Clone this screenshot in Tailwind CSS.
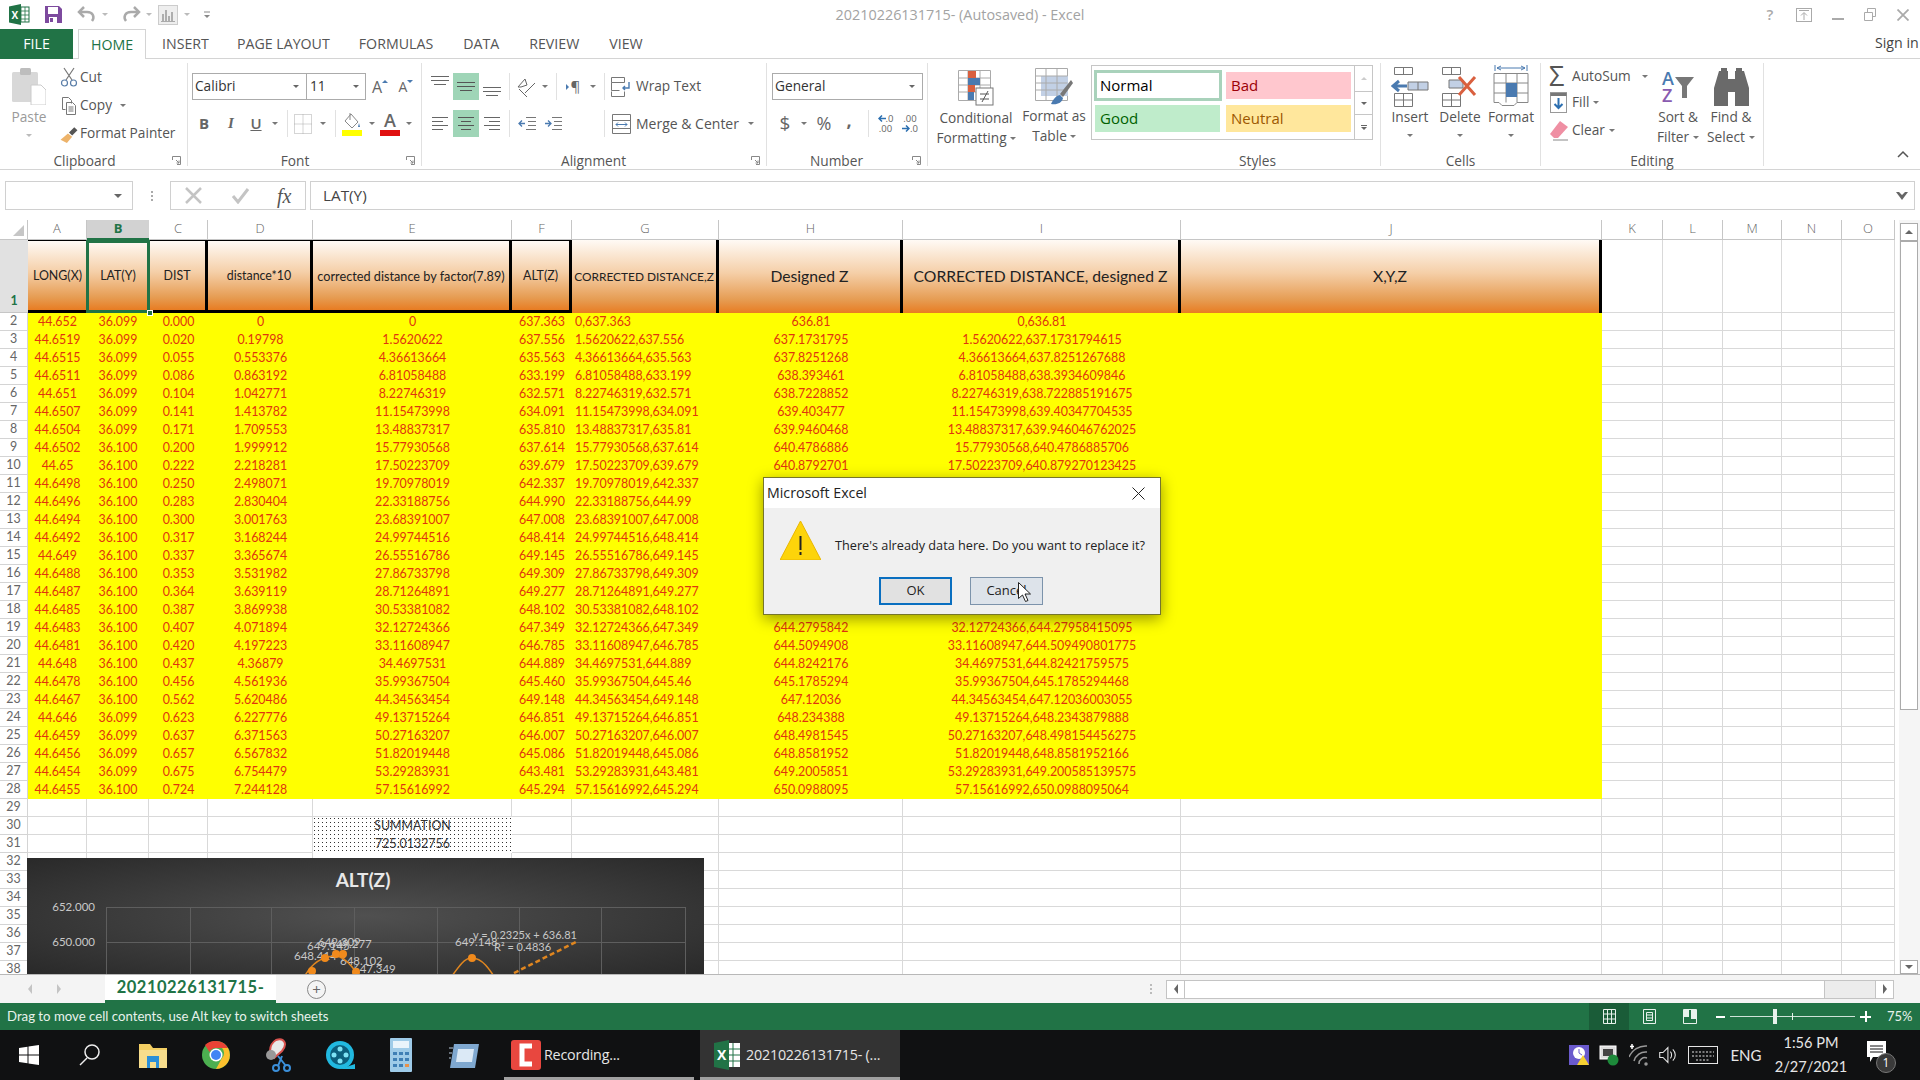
<!DOCTYPE html>
<html lang="en">
<head>
<meta charset="UTF-8">
<title>20210226131715- (Autosaved) - Excel</title>
<script src="https://cdn.jsdelivr.net/npm/@tailwindcss/browser@4"></script>
</head>
<body class="bg-white">
<div class="relative flex flex-col w-[1920px] h-[1080px] overflow-hidden bg-white text-[13.7px] text-[#555] font-['Open_Sans',sans-serif]">

  <!-- title bar -->
  <div class="relative flex items-center h-[29px] shrink-0">
    <svg class="ml-[9px] w-[21px] h-[21px]" viewBox="0 0 21 21"><rect x="8" y="3" width="12" height="15" fill="#fff" stroke="#217346"/><path d="M12 3v15M16 3v15M8 7h12M8 11h12M8 15h12" stroke="#217346" stroke-width=".8"/><path d="M0 2.500 12 0v21L0 18.500z" fill="#217346"/><text x="2.500" y="14.500" font-size="10" font-weight="700" fill="#fff">X</text></svg>
    <svg class="ml-[14px] w-[19px] h-[19px]" viewBox="0 0 19 19"><path d="M1 1h14l3 3v14H1z" fill="#7d4a9e"/><rect x="4" y="2" width="10" height="7" fill="#fff"/><rect x="5" y="12" width="8" height="6" fill="#fff"/><rect x="6" y="13" width="3" height="4" fill="#7d4a9e"/></svg>
    <svg class="ml-[14px] w-[20px] h-[18px]" viewBox="0 0 20 18" fill="none" stroke="#aaa" stroke-width="2.500"><path d="M15 15c3-4 1-9-5-9H3"/><path d="M7 1 2 6l5 5"/></svg>
    <span class="ml-[5px] border-x-[3px] border-t-[3px] border-x-transparent border-t-[#bbb]"></span>
    <svg class="ml-[13px] w-[20px] h-[18px]" viewBox="0 0 20 18" fill="none" stroke="#aaa" stroke-width="2.500"><path d="M5 15C2 11 4 6 10 6h7"/><path d="m13 1 5 5-5 5"/></svg>
    <span class="ml-[5px] border-x-[3px] border-t-[3px] border-x-transparent border-t-[#bbb]"></span>
    <svg class="ml-[6px] w-[20px] h-[20px]" viewBox="0 0 20 20"><rect x=".5" y=".5" width="19" height="19" fill="#eee" stroke="#ccc"/><path d="M5 16V9M8 16V5M11 16v-5M14 16V7" stroke="#999" stroke-width="1.500"/><path d="M3 16.500h14" stroke="#aaa"/></svg>
    <span class="ml-[6px] border-x-[3px] border-t-[3px] border-x-transparent border-t-[#bbb]"></span>
    <svg class="ml-[13px] w-[8px] h-[8px]" viewBox="0 0 8 8"><path d="M1 1h6" stroke="#888"/><path d="m1 4 3 3 3-3z" fill="#888"/></svg>
    <div class="absolute left-0 right-0 top-0 h-[29px] flex items-center justify-center text-[14.400px] text-[#a3a3a3]">20210226131715- (Autosaved) - Excel</div>
    <div class="ml-auto flex items-center text-[#aaa]">
      <span class="w-[24px] text-center text-[15px] font-semibold">?</span>
      <svg class="ml-[14px] w-[16px] h-[14px]" viewBox="0 0 16 14" fill="none" stroke="#aaa"><rect x=".5" y=".5" width="15" height="13"/><path d="M3 2.500h10M8 12V5M5 7.500l3-3 3 3"/></svg>
      <svg class="ml-[20px] w-[12px] h-[12px]" viewBox="0 0 12 12"><path d="M0 10h12" stroke="#aaa" stroke-width="2"/></svg>
      <svg class="ml-[20px] w-[12px] h-[13px]" viewBox="0 0 12 13" fill="none" stroke="#aaa"><path d="M.5 4.500h8v8h-8zM3.500 4.500v-4h8v8h-3"/></svg>
      <svg class="ml-[21px] mr-[11px] w-[12px] h-[12px]" viewBox="0 0 12 12" stroke="#aaa" stroke-width="1.800"><path d="m.5.500 11 11M11.500.500l-11 11"/></svg>
    </div>
  </div>

  <!-- tabs -->
  <div class="flex items-end h-[30px] shrink-0 border-b border-[#d4d4d4] text-[14.200px] text-[#555]">
    <div class="flex items-center justify-center w-[73px] h-[30px] bg-[#217346] text-white -mb-px">FILE</div>
    <div class="flex items-center justify-center ml-[5px] w-[68px] h-[30px] bg-white border-x border-t border-[#d4d4d4] text-[#217346] -mb-px">HOME</div>
    <div class="flex items-center h-[29px] ml-[16px]">INSERT</div>
    <div class="flex items-center h-[29px] ml-[28px]">PAGE LAYOUT</div>
    <div class="flex items-center h-[29px] ml-[29px]">FORMULAS</div>
    <div class="flex items-center h-[29px] ml-[30px]">DATA</div>
    <div class="flex items-center h-[29px] ml-[30px]">REVIEW</div>
    <div class="flex items-center h-[29px] ml-[30px]">VIEW</div>
    <div class="flex items-center h-[29px] ml-auto pb-[2px] pr-0 text-[#444] whitespace-nowrap w-[45px] overflow-hidden">Sign in</div>
  </div>

  <!-- ribbon -->
  <div class="flex h-[111px] shrink-0 pt-[4px] border-b border-[#d4d4d4]">

    <!-- Clipboard -->
    <div class="relative flex flex-col w-[188px] h-[103px] border-r border-[#e1e1e1]">
      <div class="flex h-[92px]">
        <div class="flex flex-col items-center w-[58px] pt-[5px] text-[#9a9a9a]">
          <svg class="w-[34px] h-[37px]" viewBox="0 0 34 37"><rect x="0" y="4" width="26" height="30" rx="1.500" fill="#d8d8d8"/><rect x="8" y="0" width="11" height="7" rx="1.500" fill="#bdbdbd"/><path d="M19 17h10l5 5v15H19z" fill="#fff" stroke="#ccc"/></svg>
          <span class="mt-[2px] leading-[20px]">Paste</span>
          <span class="mt-[7px] border-x-[3px] border-t-[3px] border-x-transparent border-t-[#bbb]"></span>
        </div>
        <div class="flex flex-col text-[#555]">
          <div class="flex items-center h-[28px]"><svg class="w-[22px] h-[20px]" viewBox="0 0 18 20" fill="none" stroke="#5a7ea8" stroke-width="1.200"><path d="m4 1 8 12M14 1 6 13" stroke="#777"/><circle cx="4.500" cy="16" r="3"/><circle cx="13.500" cy="16" r="3"/></svg>Cut</div>
          <div class="flex items-center h-[28px]"><svg class="w-[22px] h-[19px]" viewBox="0 0 18 19" fill="none" stroke="#777"><path d="M2.500 1.500h6l3 3v3M2.500 1.500v12h3"/><path d="M6.500 6.500h6l3 3v9h-9zM8.500 11h5M8.500 13h5M8.500 15h5"/></svg>Copy<span class="ml-[8px] border-x-[3px] border-t-[3px] border-x-transparent border-t-[#777]"></span></div>
          <div class="flex items-center h-[28px]"><svg class="w-[22px] h-[19px]" viewBox="0 0 18 18"><path d="M8 9 1 15l6 3 5-6z" fill="#edb36a"/><path d="m9 8 5-5 3 3-5 5z" fill="#555"/></svg>Format Painter</div>
        </div>
      </div>
      <div class="h-[11px] leading-[11px] text-center pr-[18px]">Clipboard</div>
      <svg class="absolute right-[6px] top-[93px] w-[9px] h-[9px]" viewBox="0 0 9 9" fill="none" stroke="#888"><path d="M.5 4V.5h8v8H5M4 4l3 3M7 4.500V7H4.500"/></svg>
    </div>

    <!-- Font -->
    <div class="relative flex flex-col w-[234px] h-[103px] border-r border-[#e1e1e1] pl-[4px]">
      <div class="h-[92px] pt-[10px]">
        <div class="flex h-[27px]">
          <div class="flex items-center justify-between w-[115px] pl-[2px] pr-[7px] border border-[#ababab] text-[#333]">Calibri<span class="border-x-[3px] border-t-[3px] border-x-transparent border-t-[#666]"></span></div>
          <div class="flex items-center justify-between w-[60px] -ml-px pl-[3px] pr-[6px] border border-[#ababab] text-[#333]">11<span class="border-x-[3px] border-t-[3px] border-x-transparent border-t-[#666]"></span></div>
          <div class="flex items-center justify-center w-[24px] ml-[2px] text-[16px] text-[#666]">A<span class="-mt-[10px] border-x-[3px] border-b-[3px] border-x-transparent border-b-[#4a7ab0]"></span></div>
          <div class="flex items-center justify-center w-[24px] ml-[2px] text-[14px] text-[#666]">A<span class="-mt-[10px] border-x-[3px] border-t-[3px] border-x-transparent border-t-[#4a7ab0]"></span></div>
        </div>
        <div class="flex items-center h-[27px] mt-[10px] text-[#666]">
          <div class="w-[24px] text-center font-bold text-[15px]">B</div>
          <div class="w-[30px] text-center italic font-semibold text-[15px] font-['Liberation_Serif',serif]">I</div>
          <div class="w-[20px] text-center underline font-semibold text-[15px]">U</div>
          <div class="flex justify-center w-[18px]"><span class="border-x-[3px] border-t-[3px] border-x-transparent border-t-[#777]"></span></div>
          <div class="ml-[3px] w-px h-[27px] bg-[#e1e1e1]"></div>
          <div class="flex justify-center w-[30px]"><svg class="w-[18px] h-[20px]" viewBox="0 0 18 20" fill="none" stroke="#aaa" stroke-dasharray="1 1"><path d="M.5.500h17v19H.5zM9 .5v19M.5 10h17"/></svg></div>
          <div class="flex justify-center w-[10px]"><span class="border-x-[3px] border-t-[3px] border-x-transparent border-t-[#777]"></span></div>
          <div class="ml-[7px] w-px h-[27px] bg-[#e1e1e1]"></div>
          <div class="flex justify-center w-[32px]"><svg class="w-[20px] h-[24px]" viewBox="0 0 20 24"><path d="m9 2 7 8-6 6-7-7z" fill="#fff" stroke="#888"/><path d="M8 1v7" stroke="#888"/><path d="m17 11 1 4h-2z" fill="#4a7ab0"/><rect y="18" width="20" height="6" fill="#ffff00"/></svg></div>
          <div class="flex justify-center w-[8px]"><span class="border-x-[3px] border-t-[3px] border-x-transparent border-t-[#777]"></span></div>
          <div class="flex flex-col items-center w-[28px]"><span class="text-[18px] leading-[19px] font-semibold">A</span><span class="w-[20px] h-[6px] bg-[#e01010]"></span></div>
          <div class="flex justify-center w-[10px]"><span class="border-x-[3px] border-t-[3px] border-x-transparent border-t-[#777]"></span></div>
        </div>
      </div>
      <div class="h-[11px] leading-[11px] text-center pr-[23px]">Font</div>
      <svg class="absolute right-[6px] top-[93px] w-[9px] h-[9px]" viewBox="0 0 9 9" fill="none" stroke="#888"><path d="M.5 4V.5h8v8H5M4 4l3 3M7 4.500V7H4.500"/></svg>
    </div>

    <!-- Alignment -->
    <div class="relative flex flex-col w-[345px] h-[103px] border-r border-[#e1e1e1] pl-[5px]">
      <div class="h-[92px] pt-[10px]">
        <div class="flex items-center h-[27px]">
          <div class="flex justify-center items-start w-[26px] h-[27px] pt-[3px]"><svg class="w-[18px] h-[10px]" viewBox="0 0 18 10" stroke="#666"><path d="M0 .5h18M0 4.500h18M3 8.500h12"/></svg></div>
          <div class="flex justify-center items-center w-[26px] h-[27px] bg-[#9fd5b7]"><svg class="w-[18px] h-[10px]" viewBox="0 0 18 10" stroke="#555"><path d="M0 .5h18M0 4.500h18M3 8.500h12"/></svg></div>
          <div class="flex justify-center items-end w-[26px] h-[27px] pb-[3px]"><svg class="w-[18px] h-[10px]" viewBox="0 0 18 10" stroke="#666"><path d="M0 .5h18M0 4.500h18M3 8.500h12"/></svg></div>
          <div class="ml-[4px] w-px h-[27px] bg-[#e1e1e1]"></div>
          <div class="flex justify-center w-[32px]"><svg class="w-[20px] h-[20px]" viewBox="0 0 20 20" fill="none" stroke="#666"><path d="m2 10 7-8 2 6-6 2zM9 16 19 6M3 12l8 8"/></svg></div>
          <div class="flex justify-center w-[6px]"><span class="border-x-[3px] border-t-[3px] border-x-transparent border-t-[#777]"></span></div>
          <div class="ml-[8px] w-px h-[27px] bg-[#e1e1e1]"></div>
          <div class="flex justify-center items-center w-[32px] text-[15px] text-[#666]"><span class="mr-[2px] border-y-[3px] border-l-[3px] border-y-transparent border-l-[#4a7ab0]"></span>¶</div>
          <div class="flex justify-center w-[8px]"><span class="border-x-[3px] border-t-[3px] border-x-transparent border-t-[#777]"></span></div>
          <div class="ml-[7px] w-px h-[27px] bg-[#e1e1e1]"></div>
          <div class="flex justify-center w-[32px]"><svg class="w-[20px] h-[20px]" viewBox="0 0 20 20" fill="none" stroke="#777"><path d="M.5.500h13v5H.5zM.5 5.500v8h8M.5 14.500v5h13v-5"/><path d="M18 5v6h-6m2-2-2 2 2 2" stroke="#4a7ab0" stroke-width="1.400"/></svg></div>
          <span class="-ml-[1px]">Wrap Text</span>
        </div>
        <div class="flex items-center h-[27px] mt-[10px]">
          <div class="flex justify-center w-[26px]"><svg class="w-[16px] h-[14px]" viewBox="0 0 16 14" stroke="#666"><path d="M0 .5h16M0 4.500h11M0 8.500h16M0 12.500h11"/></svg></div>
          <div class="flex justify-center items-center w-[26px] h-[27px] bg-[#9fd5b7]"><svg class="w-[16px] h-[14px]" viewBox="0 0 16 14" stroke="#555"><path d="M0 .5h16M3 4.500h10M0 8.500h16M3 12.500h10"/></svg></div>
          <div class="flex justify-center w-[26px]"><svg class="w-[16px] h-[14px]" viewBox="0 0 16 14" stroke="#666"><path d="M0 .5h16M5 4.500h11M0 8.500h16M5 12.500h11"/></svg></div>
          <div class="ml-[4px] w-px h-[27px] bg-[#e1e1e1]"></div>
          <div class="flex justify-center w-[34px]"><svg class="w-[18px] h-[13px]" viewBox="0 0 18 13" fill="none" stroke="#777"><path d="M8 .5h10M8 12.500h10M10 4.500h8M10 8.500h8"/><path d="M7 6.500H1m3-3-3 3 3 3" stroke="#4a7ab0" stroke-width="1.300"/></svg></div>
          <div class="flex justify-center w-[18px]"><svg class="w-[18px] h-[13px]" viewBox="0 0 18 13" fill="none" stroke="#777"><path d="M8 .5h10M8 12.500h10M10 4.500h8M10 8.500h8"/><path d="M1 6.500h6m-3-3 3 3-3 3" stroke="#4a7ab0" stroke-width="1.300"/></svg></div>
          <div class="ml-[42px] w-px h-[27px] bg-[#e1e1e1]"></div>
          <div class="flex justify-center w-[32px]"><svg class="w-[19px] h-[20px]" viewBox="0 0 19 20" fill="none" stroke="#777"><path d="M.5.500h18v19H.5zM.5 6.500h18M.5 14.500h18"/><path d="M4 10.500h11m-9-2-2 2 2 2m7-4 2 2-2 2" stroke="#4a7ab0"/></svg></div>
          <span class="-ml-[1px] text-[14px]">Merge &amp; Center</span>
          <span class="ml-[9px] border-x-[3px] border-t-[3px] border-x-transparent border-t-[#777]"></span>
        </div>
      </div>
      <div class="h-[11px] leading-[11px] text-center pr-[6px]">Alignment</div>
      <svg class="absolute right-[6px] top-[93px] w-[9px] h-[9px]" viewBox="0 0 9 9" fill="none" stroke="#888"><path d="M.5 4V.5h8v8H5M4 4l3 3M7 4.500V7H4.500"/></svg>
    </div>

    <!-- Number -->
    <div class="relative flex flex-col w-[161px] h-[103px] border-r border-[#e1e1e1] pl-[5px]">
      <div class="h-[92px] pt-[10px]">
        <div class="flex items-center justify-between w-[151px] h-[27px] pl-[2px] pr-[7px] border border-[#ababab] text-[#333]">General<span class="border-x-[3px] border-t-[3px] border-x-transparent border-t-[#666]"></span></div>
        <div class="flex items-center h-[27px] mt-[10px] text-[#666]">
          <div class="w-[26px] text-center text-[19px]">$</div>
          <div class="flex justify-center w-[12px]"><span class="border-x-[3px] border-t-[3px] border-x-transparent border-t-[#777]"></span></div>
          <div class="w-[28px] text-center text-[18px]">%</div>
          <div class="w-[22px] -mt-[7px] text-center text-[18px] font-bold">,</div>
          <div class="ml-[8px] w-px h-[27px] bg-[#e1e1e1]"></div>
          <div class="flex flex-col items-center w-[33px] text-[9.500px] leading-[10px]">
            <span class="flex items-center"><svg class="w-[8px] h-[7px]" viewBox="0 0 8 7" fill="none" stroke="#2c6fb0" stroke-width="1.500"><path d="M8 3.500H1m3-3-3 3 3 3"/></svg>.0</span><span>.00</span>
          </div>
          <div class="flex flex-col items-center w-[16px] text-[9.500px] leading-[10px]">
            <span>.00</span><span class="flex items-center"><svg class="w-[8px] h-[7px]" viewBox="0 0 8 7" fill="none" stroke="#2c6fb0" stroke-width="1.500"><path d="M0 3.500h7m-3-3 3 3-3 3"/></svg>.0</span>
          </div>
        </div>
      </div>
      <div class="h-[11px] leading-[11px] text-center pr-[26px]">Number</div>
      <svg class="absolute right-[6px] top-[93px] w-[9px] h-[9px]" viewBox="0 0 9 9" fill="none" stroke="#888"><path d="M.5 4V.5h8v8H5M4 4l3 3M7 4.500V7H4.500"/></svg>
    </div>

    <!-- Styles -->
    <div class="flex flex-col w-[453px] h-[103px] border-r border-[#e1e1e1]">
      <div class="flex h-[92px]">
        <div class="flex flex-col items-center w-[96px] pt-[7px] leading-[20px] whitespace-nowrap">
          <svg class="w-[36px] h-[36px]" viewBox="0 0 36 36"><path d="M.5.500h32v30H.5zM.5 8h32M.5 15h32M.5 22h32M10 .5v30M22 .5v30" fill="#fff" stroke="#aaa"/><rect x="10" y="1" width="8" height="7" fill="#d9603f"/><rect x="10" y="8" width="12" height="7" fill="#4a7ab0"/><rect x="10" y="15" width="7" height="7" fill="#d9603f"/><rect x="10" y="22" width="6" height="8" fill="#4a7ab0"/><rect x="18" y="18" width="17" height="17" fill="#fff" stroke="#777"/><path d="M22 24h9M22 29h9M24 32l6-11" stroke="#555" fill="none"/></svg>
          <span class="mt-[2px]">Conditional</span>
          <span class="flex items-center">Formatting<span class="ml-[3px] border-x-[3px] border-t-[3px] border-x-transparent border-t-[#777]"></span></span>
        </div>
        <div class="flex flex-col items-center w-[60px] pt-[5px] leading-[20px] whitespace-nowrap">
          <svg class="w-[38px] h-[38px]" viewBox="0 0 38 38"><path d="M.5.500h32v32H.5z" fill="#fff" stroke="#aaa"/><path d="M6 8h27v20H6z" fill="#c2d0e5"/><path d="M.5 8h32M.5 15h32M.5 22h32M11 .5v32M22 .5v32" stroke="#aaa" fill="none"/><path d="M36 12 25 26l3 3 10-14z" fill="#777"/><path d="M25 27c-5 1-7 5-9 9 6 1 11-1 12-6z" fill="#4a7ab0"/></svg>
          <span>Format as</span>
          <span class="flex items-center">Table<span class="ml-[3px] border-x-[3px] border-t-[3px] border-x-transparent border-t-[#777]"></span></span>
        </div>
        <div class="flex ml-[7px] mt-[2px] w-[282px] h-[75px] border border-[#c6c6c6]">
          <div class="grid grid-cols-[132px_125px] grid-rows-[33px_29px] w-[263px] pl-[2px] pt-[4px] text-[15px]">
            <div class="flex items-center w-[128px] h-[31px] pl-[3px] border-[3px] border-[#a9d2bb] text-black">Normal</div>
            <div class="flex items-center h-[27px] mt-[2px] pl-[5px] bg-[#ffc7ce] text-[#9c0006]">Bad</div>
            <div class="flex items-center w-[125px] h-[27px] mt-[2px] ml-px pl-[5px] bg-[#bfeccb] text-[#006100]">Good</div>
            <div class="flex items-center h-[27px] mt-[2px] pl-[5px] bg-[#ffe79c] text-[#9c5700]">Neutral</div>
          </div>
          <div class="flex flex-col w-[18px] ml-auto border-l border-[#c6c6c6]">
            <div class="flex items-center justify-center h-[26px] border-b border-[#c6c6c6]"><span class="border-x-[3px] border-b-[3px] border-x-transparent border-b-[#ccc]"></span></div>
            <div class="flex items-center justify-center h-[23px] border-b border-[#c6c6c6]"><span class="border-x-[3px] border-t-[3px] border-x-transparent border-t-[#666]"></span></div>
            <div class="flex flex-col items-center justify-center flex-1 gap-[1px]"><span class="w-[6px] h-px bg-[#666]"></span><span class="border-x-[3px] border-t-[3px] border-x-transparent border-t-[#666]"></span></div>
          </div>
        </div>
      </div>
      <div class="h-[11px] leading-[11px] text-center pl-[207px]">Styles</div>
    </div>

    <!-- Cells -->
    <div class="flex flex-col w-[160px] h-[103px] border-r border-[#e1e1e1]">
      <div class="flex h-[92px] pl-[4px]">
        <div class="flex flex-col items-center w-[50px] pt-[4px] leading-[20px]">
          <svg class="w-[38px] h-[40px]" viewBox="0 0 38 40" fill="none" stroke="#777"><path d="M3.500.500h18v7h-18zM12.500.500v7M3.500 26.500h18v13h-18zM12.500 26.500v13M3.500 33h18"/><path d="M17 15h20v8H17zM27 15v8" fill="#c2d0e5"/><path d="M16 19H2m6-5-6 5 6 5" stroke="#4a7ab0" stroke-width="3"/></svg>
          <span>Insert</span>
          <span class="mt-[7px] border-x-[3px] border-t-[3px] border-x-transparent border-t-[#777]"></span>
        </div>
        <div class="flex flex-col items-center w-[50px] pt-[4px] leading-[20px]">
          <svg class="w-[38px] h-[40px]" viewBox="0 0 38 40" fill="none" stroke="#777"><path d="M1.500.500h18v7h-18zM10.500.500v7M1.500 26.500h18v13h-18zM10.500 26.500v13M1.500 33h18"/><path d="M8 13h14v8H8z" fill="#c2d0e5"/><path d="m18 10 16 18M34 10 18 28" stroke="#d9603f" stroke-width="3"/></svg>
          <span>Delete</span>
          <span class="mt-[7px] border-x-[3px] border-t-[3px] border-x-transparent border-t-[#777]"></span>
        </div>
        <div class="flex flex-col items-center w-[52px] pt-[2px] leading-[20px]">
          <svg class="w-[36px] h-[42px]" viewBox="0 0 36 42" fill="none" stroke="#888"><path d="M1 8.500h34v29H24l-3 3H9l-3-3H1zM1 18h34M1 28h34M13 8.500v29M24 8.500v29"/><rect x="13" y="18" width="11" height="14" fill="#4a7ab0" stroke="none"/><path d="M2 0v6M34 0v6M4 3h28m-24-2-4 2 4 2m20-4 4 2-4 2" stroke="#4a7ab0"/></svg>
          <span>Format</span>
          <span class="mt-[7px] border-x-[3px] border-t-[3px] border-x-transparent border-t-[#777]"></span>
        </div>
      </div>
      <div class="h-[11px] leading-[11px] text-center">Cells</div>
    </div>

    <!-- Editing -->
    <div class="flex flex-col w-[223px] h-[103px] border-r border-[#e1e1e1]">
      <div class="flex h-[92px]">
        <div class="flex flex-col w-[112px]">
          <div class="flex items-center h-[26px] pl-[8px]"><span class="w-[23px] text-[27px] leading-[24px] text-[#555]">Σ</span>AutoSum<span class="ml-[11px] border-x-[3px] border-t-[3px] border-x-transparent border-t-[#777]"></span></div>
          <div class="flex items-center h-[26px] pl-[9px]"><svg class="mr-[5px] w-[17px] h-[21px]" viewBox="0 0 17 21" fill="none"><rect x=".5" y=".5" width="16" height="20" stroke="#999"/><path d="M.5 2.500h16" stroke="#777" stroke-width="3"/><path d="M8.500 6v10m-4-4 4 4 4-4" stroke="#2c6fb0" stroke-width="2"/></svg>Fill<span class="ml-[4px] border-x-[3px] border-t-[3px] border-x-transparent border-t-[#777]"></span></div>
          <div class="flex items-center h-[26px] mt-[2px] pl-[9px]"><svg class="mr-[4px] w-[18px] h-[21px]" viewBox="0 0 18 21"><path d="M10 1 18 7 8 18H4l-4-4z" fill="#ef8fa3"/><path d="M3 20h15" stroke="#888"/></svg>Clear<span class="ml-[4px] border-x-[3px] border-t-[3px] border-x-transparent border-t-[#777]"></span></div>
        </div>
        <div class="flex flex-col items-center w-[50px] pt-[5px] leading-[20px] whitespace-nowrap">
          <div class="flex items-center h-[38px]"><div class="flex flex-col text-[18px] leading-[17px] font-semibold"><span class="text-[#4a7ab0]">A</span><span class="text-[#8a5bb0]">Z</span></div><svg class="ml-[1px] w-[19px] h-[21px]" viewBox="0 0 19 21"><path d="M0 0h19l-7 9v12H7V9z" fill="#777"/></svg></div>
          <span class="mt-[1px]">Sort &amp;</span>
          <span class="flex items-center">Filter<span class="ml-[4px] border-x-[3px] border-t-[3px] border-x-transparent border-t-[#777]"></span></span>
        </div>
        <div class="flex flex-col items-center w-[56px] pt-[5px] leading-[20px] whitespace-nowrap">
          <svg class="w-[35px] h-[38px]" viewBox="0 0 35 38" fill="#6a6a6a"><path d="M5 3h9v35H0V20zM21 3h9l5 17v18H21z"/><rect x="14" y="11" width="7" height="13"/><rect x="7" y="0" width="6" height="6"/><rect x="22" y="0" width="6" height="6"/></svg>
          <span class="mt-[1px]">Find &amp;</span>
          <span class="flex items-center">Select<span class="ml-[4px] border-x-[3px] border-t-[3px] border-x-transparent border-t-[#777]"></span></span>
        </div>
      </div>
      <div class="h-[11px] leading-[11px] text-center">Editing</div>
    </div>

    <div class="flex-1 flex justify-end items-end pr-[11px] pb-[11px]">
      <svg class="w-[12px] h-[8px]" viewBox="0 0 12 8" fill="none" stroke="#555" stroke-width="1.500"><path d="m1 7 5-5 5 5"/></svg>
    </div>
  </div>

  <!-- formula bar -->
  <div class="flex items-stretch h-[29px] mt-[11px] shrink-0 pl-[5px] pr-[5px]">
    <div class="flex items-center justify-end w-[128px] pr-[10px] border border-[#d0d0d0]"><span class="border-x-[4px] border-t-[4px] border-x-transparent border-t-[#666]"></span></div>
    <div class="flex flex-col items-center justify-center gap-[2px] w-[37px]"><span class="w-[2px] h-[2px] bg-[#aaa]"></span><span class="w-[2px] h-[2px] bg-[#aaa]"></span><span class="w-[2px] h-[2px] bg-[#aaa]"></span></div>
    <div class="flex items-center w-[136px] border border-[#d0d0d0]">
      <svg class="ml-[14px] w-[17px] h-[17px]" viewBox="0 0 17 17" stroke="#c4c4c4" stroke-width="2.500"><path d="m1 1 15 15M16 1 1 16"/></svg>
      <svg class="ml-[29px] w-[19px] h-[17px]" viewBox="0 0 19 17" fill="none" stroke="#c4c4c4" stroke-width="3"><path d="m2 9 5 6L17 2"/></svg>
      <span class="ml-[27px] italic text-[20px] font-['Liberation_Serif',serif] text-[#555]">fx</span>
    </div>
    <div class="flex items-center flex-1 ml-[4px] pl-[12px] pr-[6px] border border-[#d0d0d0] text-[#444] text-[15.300px]">LAT(Y)<svg class="ml-auto w-[12px] h-[9px]" viewBox="0 0 12 9" fill="#666"><path d="M0 1h3l3 3 3-3h3L6 9z"/></svg></div>
  </div>

  <!-- sheet -->
  <div class="flex h-[754px] mt-[10px] shrink-0">
    <div class="relative w-[1899px] h-[754px] overflow-hidden">
      <div id="grid" class="grid grid-cols-[28px_59px_62px_59px_105px_199px_60px_147px_184px_278px_421px_61px_60px_59px_60px_53px] grid-rows-[20px_73px] auto-rows-[18px] font-['Lato',sans-serif] text-[12.400px]"></div>

      <!-- selected cell B1 -->
      <div class="absolute left-[86px] top-[20px] w-[64px] h-[73px] border-[3px] border-[#217346]"></div>
      <div class="absolute left-[147px] top-[90px] w-[6px] h-[6px] bg-[#217346] border border-white"></div>

      <!-- chart over rows 32-38 -->
      <div class="absolute left-[27px] top-[638px] w-[677px] h-[116px] overflow-hidden bg-[radial-gradient(ellipse_at_center,#505050,#292929)]">
        <svg class="w-[677px] h-[116px] font-['Lato',sans-serif]" viewBox="0 0 677 116">
          <g stroke="#5e5e5e" fill="none"><path d="M79.500 49.500h579M79.500 84.500h579M79.500 49v70M163.500 49v70M244.500 49v70M327.500 49v70M410.500 49v70M492.500 49v70M574.500 49v70M658.500 49v70"/></g>
          <text x="336" y="29" text-anchor="middle" font-size="19" font-weight="700" fill="#e8e8e8">ALT(Z)</text>
          <g font-size="11.500" fill="#c8c8c8">
            <text x="68" y="53" text-anchor="end">652.000</text>
            <text x="68" y="88" text-anchor="end">650.000</text>
            <text x="280" y="92">649.145</text><text x="291" y="88">649.309</text><text x="302" y="90">649.277</text>
            <text x="267" y="102">648.414</text><text x="313" y="107">648.102</text><text x="326" y="115">647.349</text>
            <text x="428" y="88">649.148</text>
            <text x="446" y="81" font-size="11">y = 0.2325x + 636.81</text>
            <text x="467" y="93" font-size="11">R² = 0.4836</text>
          </g>
          <path d="M270 130C278 118 284 104 298 100 308 96 316 96 329 114L340 130M420 125C432 108 438 99 445 100 455 100 462 110 472 126" fill="none" stroke="#e0861f" stroke-width="1.500"/>
          <path d="M487 115 549 84" fill="none" stroke="#e0861f" stroke-width="2.500" stroke-dasharray="5 3"/>
          <g fill="#f08a1c"><circle cx="285" cy="113" r="4"/><circle cx="298" cy="100" r="4"/><circle cx="309" cy="96" r="4"/><circle cx="316" cy="96" r="4"/><circle cx="329" cy="114" r="4"/><circle cx="445" cy="100" r="4"/></g>
        </svg>
      </div>
    </div>
    <!-- vertical scrollbar -->
    <div class="flex flex-col w-[21px] h-[754px] pl-[1px] pr-[2px] bg-[#f5f5f5]">
      <div class="flex items-center justify-center h-[18px] mt-[3px] bg-white border border-[#ababab]"><span class="border-x-[4px] border-b-[4px] border-x-transparent border-b-[#666]"></span></div>
      <div class="h-[469px] bg-white border border-[#ababab]"></div>
      <div class="flex items-center justify-center h-[14px] mt-auto bg-white border border-[#ababab]"><span class="border-x-[4px] border-t-[4px] border-x-transparent border-t-[#666]"></span></div>
    </div>
  </div>

  <!-- sheet tabs -->
  <div class="flex items-center h-[29px] shrink-0 bg-[#f4f4f4] border-t border-[#b8b8b8]">
    <span class="ml-[28px] border-y-[5px] border-r-[4px] border-y-transparent border-r-[#c4c4c4]"></span>
    <span class="ml-[25px] border-y-[5px] border-l-[4px] border-y-transparent border-l-[#c4c4c4]"></span>
    <div class="flex items-center justify-center ml-[44px] w-[171px] h-[28px] self-start bg-white border-b-[3px] border-[#217346] text-[16.500px] font-bold text-[#217346] font-['Lato',sans-serif] tracking-[.5px]">20210226131715-</div>
    <div class="flex items-center justify-center ml-[31px] w-[19px] h-[19px] rounded-full border border-[#888] text-[15px] leading-none text-[#666]">+</div>
    <div class="flex flex-col gap-[2px] ml-[824px]"><span class="w-[2px] h-[2px] bg-[#bbb]"></span><span class="w-[2px] h-[2px] bg-[#bbb]"></span><span class="w-[2px] h-[2px] bg-[#bbb]"></span></div>
    <div class="flex items-stretch ml-[14px] w-[728px] h-[19px] bg-[#ececec] border border-[#c4c4c4]">
      <div class="flex items-center justify-center w-[18px] bg-white border-r border-[#c4c4c4]"><span class="border-y-[5px] border-r-[4px] border-y-transparent border-r-[#666]"></span></div>
      <div class="w-[640px] bg-white border-r border-[#c4c4c4]"></div>
      <div class="flex items-center justify-center w-[18px] ml-auto bg-white border-l border-[#c4c4c4]"><span class="border-y-[5px] border-l-[4px] border-y-transparent border-l-[#666]"></span></div>
    </div>
  </div>

  <!-- status bar -->
  <div class="flex items-center h-[27px] shrink-0 bg-[#217346] text-white font-['Lato',sans-serif] text-[13.200px]">
    <span class="ml-[7px] text-[#e8f2ec]">Drag to move cell contents, use Alt key to switch sheets</span>
    <div class="flex items-center justify-center ml-auto w-[40px] h-[27px] bg-[#1a5c38]"><svg class="w-[13px] h-[15px]" viewBox="0 0 13 15" fill="none" stroke="#e8f2ec"><path d="M.5.500h12v14H.5zM.5 5h12M.5 10h12M4.500.5v14M8.500.5v14"/></svg></div>
    <svg class="ml-[14px] w-[13px] h-[15px]" viewBox="0 0 13 15" fill="none" stroke="#e8f2ec"><path d="M.5.500h12v14H.5zM3.500 3.500h6v8h-6zM3.500 6h6M3.500 9h6"/></svg>
    <svg class="ml-[27px] w-[14px] h-[15px]" viewBox="0 0 14 15"><path d="M.5.500h13v14H.5z" fill="none" stroke="#e8f2ec"/><rect x="1" y="1" width="5" height="7" fill="#e8f2ec"/><rect x="8" y="1" width="5" height="9" fill="#e8f2ec"/></svg>
    <span class="ml-[19px] w-[9px] h-[2px] bg-white"></span>
    <div class="relative ml-[5px] w-[125px] h-px bg-[#cfe3d8]">
      <span class="absolute left-[43px] -top-[7px] w-[4px] h-[15px] bg-[#e8f2ec]"></span>
      <span class="absolute left-[62px] -top-[3px] w-px h-[7px] bg-[#e8f2ec]"></span>
    </div>
    <span class="relative ml-[5px] w-[11px] h-[2px] bg-white"><span class="absolute left-[4.500px] -top-[4.500px] w-[2px] h-[11px] bg-white"></span></span>
    <span class="ml-[16px] w-[33px] text-[13px] text-[#e8f2ec]">75%</span>
  </div>

  <!-- taskbar -->
  <div class="flex items-center h-[50px] shrink-0 bg-[#101112] text-[#e6e6e6]">
    <div class="flex justify-center w-[58px]"><svg class="w-[20px] h-[20px]" viewBox="0 0 20 20" fill="#fff"><path d="M0 3 8.500 1.800v7.700H0zM9.500 1.600 20 0v9.500H9.500zM0 10.500h8.500v7.700L0 17zM9.500 10.500H20V20L9.500 18.400z"/></svg></div>
    <div class="flex justify-center w-[64px]"><svg class="w-[22px] h-[22px]" viewBox="0 0 22 22" fill="none" stroke="#eee" stroke-width="1.500"><circle cx="13" cy="8" r="7"/><path d="M8 14 1 21"/></svg></div>
    <div class="flex justify-center w-[62px]"><svg class="w-[28px] h-[26px]" viewBox="0 0 28 26"><path d="M0 2h11l3 4h14v20H0z" fill="#f3cf63"/><path d="M0 8h28v18H0z" fill="#f7dd8c"/><path d="M8 14h12v12h-3v-6h-6v6H8z" fill="#2b8fd8"/></svg></div>
    <div class="flex justify-center w-[63px]"><svg class="w-[28px] h-[28px]" viewBox="0 0 28 28"><circle cx="14" cy="14" r="14" fill="#4caf50"/><path d="M14 0a14 14 0 0 1 12 7H14a7 7 0 0 0-6.500 4L3 4a14 14 0 0 1 11-4z" fill="#ea4335"/><path d="M26 7a14 14 0 0 1-12 21l6-11a7 7 0 0 0 0-10z" fill="#fbc02d"/><circle cx="14" cy="14" r="6.500" fill="#fff"/><circle cx="14" cy="14" r="5" fill="#4285f4"/></svg></div>
    <div class="flex justify-center w-[63px]"><svg class="w-[28px] h-[34px]" viewBox="0 0 28 34" fill="none"><path d="M11 2c8-3 12 4 6 11l-8 7c-5-2-6-13 2-18z" fill="#e9e9e9" stroke="#d9534f" stroke-width="2"/><path d="m13 18 8 10M17 18l-4 10" stroke="#3b8fd9" stroke-width="2"/><circle cx="22" cy="30" r="3" stroke="#3b8fd9" stroke-width="2"/><circle cx="11" cy="30" r="3" stroke="#3b8fd9" stroke-width="2"/><circle cx="6" cy="17" r="5" fill="#999"/></svg></div>
    <div class="flex justify-center w-[60px]"><svg class="w-[30px] h-[30px]" viewBox="0 0 30 30"><circle cx="15" cy="15" r="14" fill="#21b9e0"/><circle cx="15" cy="15" r="10" fill="#0c5f7d"/><g fill="#7fe3f5"><circle cx="15" cy="9" r="2.500"/><circle cx="15" cy="21" r="2.500"/><circle cx="9" cy="15" r="2.500"/><circle cx="21" cy="15" r="2.500"/></g><path d="M15 29h15v-5z" fill="#21b9e0"/></svg></div>
    <div class="flex justify-center w-[62px]"><svg class="w-[22px] h-[34px]" viewBox="0 0 22 34"><rect width="22" height="34" rx="1" fill="#9ecbe8"/><rect x="3" y="3" width="16" height="7" fill="#e9f4fb"/><path d="M3 14h4v3H3zM9 14h4v3H9zM15 14h4v3h-4zM3 20h4v3H3zM9 20h4v3H9zM15 20h4v3h-4zM3 26h4v3H3zM9 26h4v3H9z" fill="#3f7fb5"/><rect x="15" y="26" width="4" height="3" fill="#e8914a"/></svg></div>
    <div class="flex justify-center w-[63px]"><svg class="w-[30px] h-[26px]" viewBox="0 0 30 26"><path d="M5 2h25l-4 24H1z" fill="#7fa8d0"/><path d="M9 7h16l-2 13H7z" fill="#dbe9f6"/><path d="M0 6h4M0 11h3M0 16h2" stroke="#bcd" stroke-width="1"/></svg></div>
    <div class="relative flex items-center w-[190px] h-[50px] ml-[9px] pl-[7px]">
      <svg class="w-[30px] h-[30px]" viewBox="0 0 30 30"><rect width="30" height="30" rx="3" fill="#e8473f"/><path d="M21 6H11v18h10" fill="none" stroke="#fff" stroke-width="5"/></svg>
      <span class="ml-[3px] text-[14.300px] tracking-[-.2px]">Recording...</span>
      <span class="absolute left-0 right-0 bottom-0 h-[3px] bg-[#a0a0a0]"></span>
    </div>
    <div class="relative flex items-center w-[200px] h-[50px] ml-[6px] pl-[14px] bg-[#333]">
      <svg class="w-[27px] h-[30px]" viewBox="0 0 27 30"><rect x="12" y="3" width="14" height="24" fill="#fff"/><path d="M12 9h14M12 15h14M12 21h14M19 3v24" stroke="#217346"/><path d="M0 3 15 0v30L0 27z" fill="#217346"/><text x="3" y="20" font-size="14" font-weight="700" fill="#fff">X</text></svg>
      <span class="ml-[5px] text-[14.300px] whitespace-nowrap tracking-[-.2px]">20210226131715- (...</span>
      <span class="absolute left-0 right-0 bottom-0 h-[3px] bg-[#a0a0a0]"></span>
    </div>
    <div class="ml-auto flex items-center">
      <svg class="w-[20px] h-[20px]" viewBox="0 0 20 20"><rect width="20" height="20" fill="#6a5acd"/><circle cx="10" cy="8" r="6" fill="#fff"/><path d="M10 4v4l3 2" stroke="#6a5acd" fill="none"/><path d="m14 10 6 10H8z" fill="#f5d033"/></svg>
      <svg class="ml-[10px] w-[20px] h-[21px]" viewBox="0 0 20 21"><rect x="1" y="1" width="16" height="13" fill="#ddd" stroke="#fff"/><rect x="4" y="4" width="10" height="7" fill="#444"/><circle cx="14" cy="15" r="5.500" fill="#1d8a3a"/></svg>
      <svg class="ml-[10px] w-[20px] h-[24px]" viewBox="0 0 20 24" fill="none" stroke="#9a9a9a" stroke-width="1.500"><path d="M0 14a18 18 0 0 1 18-11M5 18a12 12 0 0 1 13-9M10 21a6 6 0 0 1 8-6"/><circle cx="17" cy="21" r="1" fill="#9a9a9a"/><path d="M3 1v5M1 3.500h4" stroke="#fff"/></svg>
      <svg class="ml-[8px] w-[21px] h-[18px]" viewBox="0 0 21 22" fill="none" stroke="#e6e6e6" stroke-width="1.300"><path d="M1 8h4l6-6v18l-6-6H1zM14 7c2 2 2 6 0 8M17 4c4 4 4 10 0 14"/></svg>
      <svg class="ml-[10px] w-[30px] h-[18px]" viewBox="0 0 30 18" fill="none" stroke="#e6e6e6"><rect x=".5" y=".5" width="29" height="17"/><path d="M4 6h22M4 10h22M8 14h14" stroke-dasharray="2 1.500"/></svg>
      <span class="ml-[10px] text-[15px] w-[36px] text-center font-['Lato',sans-serif]">ENG</span>
      <div class="flex flex-col items-center ml-[10px] w-[74px] text-[14.600px] leading-[24px] font-['Lato',sans-serif]"><span>1:56 PM</span><span>2/27/2021</span></div>
      <div class="relative w-[22px] h-[22px] ml-[19px] mr-[31px] -mt-[6px]">
        <svg class="w-[19px] h-[22px]" viewBox="0 0 19 22" fill="#fff"><path d="M0 0h19v16H6l-3 5v-5H0z"/><path d="M3 5h13M3 8h13M3 11h13" stroke="#101112"/></svg>
        <span class="absolute left-[9px] top-[12px] flex items-center justify-center w-[20px] h-[20px] rounded-full bg-[#3a3a3a] border border-[#777] text-[12px] text-white">1</span>
      </div>
    </div>
  </div>

  <!-- dialog -->
  <div class="absolute left-[763px] top-[477px] w-[398px] h-[138px] flex flex-col bg-[#f0f0f0] border border-[#76762a] shadow-[0_4px_14px_rgba(0,0,0,0.4)] text-[#222]">
    <div class="flex items-center h-[30px] shrink-0 bg-white pl-[3px] text-[14.200px]">Microsoft Excel<svg class="ml-auto mr-[15px] w-[13px] h-[13px]" viewBox="0 0 13 13" stroke="#222"><path d="m.5.500 12 12M12.500.500l-12 12"/></svg></div>
    <div class="flex items-center h-[61px] pl-[16px]">
      <svg class="w-[41px] h-[39px] mt-[4px]" viewBox="0 0 41 39"><path d="M20.500 0 41 39H0z" fill="#fdd40a" stroke="#e9b700"/><path d="M20.500 15v14M20.500 31v3" stroke="#222" stroke-width="2"/></svg>
      <span class="ml-[14px] mt-[14px] text-[12.700px] whitespace-nowrap">There's already data here. Do you want to replace it?</span>
    </div>
    <div class="flex mt-[8px] ml-[115px]">
      <div class="flex items-center justify-center w-[73px] h-[28px] bg-[#e1e1e1] border-2 border-[#0a6fc0] text-[13px]">OK</div>
      <div class="flex items-center justify-center ml-[18px] w-[73px] h-[28px] bg-[#dde3ea] border border-[#7c93ab] text-[13px]">Cancel</div>
    </div>
  </div>
  <!-- mouse cursor -->
  <svg class="absolute left-[1018px] top-[582px] w-[13px] h-[20px]" viewBox="0 0 13 20"><path d="M.5.500v16l4-3.500 3 6.500 2.500-1-3-6.500h5.500z" fill="#fff" stroke="#222"/></svg>
</div>

<script>
    // col letters and row data: long, lat, dist, d10, corrected, alt, G, H, I
    // H and I of rows 11-18 sit behind the dialog, so they stay empty
    var letters = "ABCDEFGHIJKLMNO".split("");
    var rows = [
        ["44.652","36.099","0.000","0","0","637.363","0,637.363","636.81","0,636.81"],
        ["44.6519","36.099","0.020","0.19798","1.5620622","637.556","1.5620622,637.556","637.1731795","1.5620622,637.1731794615"],
        ["44.6515","36.099","0.055","0.553376","4.36613664","635.563","4.36613664,635.563","637.8251268","4.36613664,637.8251267688"],
        ["44.6511","36.099","0.086","0.863192","6.81058488","633.199","6.81058488,633.199","638.393461","6.81058488,638.3934609846"],
        ["44.651","36.099","0.104","1.042771","8.22746319","632.571","8.22746319,632.571","638.7228852","8.22746319,638.722885191675"],
        ["44.6507","36.099","0.141","1.413782","11.15473998","634.091","11.15473998,634.091","639.403477","11.15473998,639.40347704535"],
        ["44.6504","36.099","0.171","1.709553","13.48837317","635.810","13.48837317,635.81","639.9460468","13.48837317,639.946046762025"],
        ["44.6502","36.100","0.200","1.999912","15.77930568","637.614","15.77930568,637.614","640.4786886","15.77930568,640.4786885706"],
        ["44.65","36.100","0.222","2.218281","17.50223709","639.679","17.50223709,639.679","640.8792701","17.50223709,640.879270123425"],
        ["44.6498","36.100","0.250","2.498071","19.70978019","642.337","19.70978019,642.337","",""],
        ["44.6496","36.100","0.283","2.830404","22.33188756","644.990","22.33188756,644.99","",""],
        ["44.6494","36.100","0.300","3.001763","23.68391007","647.008","23.68391007,647.008","",""],
        ["44.6492","36.100","0.317","3.168244","24.99744516","648.414","24.99744516,648.414","",""],
        ["44.649","36.100","0.337","3.365674","26.55516786","649.145","26.55516786,649.145","",""],
        ["44.6488","36.100","0.353","3.531982","27.86733798","649.309","27.86733798,649.309","",""],
        ["44.6487","36.100","0.364","3.639119","28.71264891","649.277","28.71264891,649.277","",""],
        ["44.6485","36.100","0.387","3.869938","30.53381082","648.102","30.53381082,648.102","",""],
        ["44.6483","36.100","0.407","4.071894","32.12724366","647.349","32.12724366,647.349","644.2795842","32.12724366,644.27958415095"],
        ["44.6481","36.100","0.420","4.197223","33.11608947","646.785","33.11608947,646.785","644.5094908","33.11608947,644.509490801775"],
        ["44.648","36.100","0.437","4.36879","34.4697531","644.889","34.4697531,644.889","644.8242176","34.4697531,644.82421759575"],
        ["44.6478","36.100","0.456","4.561936","35.99367504","645.460","35.99367504,645.46","645.1785294","35.99367504,645.1785294468"],
        ["44.6467","36.100","0.562","5.620486","44.34563454","649.148","44.34563454,649.148","647.12036","44.34563454,647.12036003055"],
        ["44.646","36.099","0.623","6.227776","49.13715264","646.851","49.13715264,646.851","648.234388","49.13715264,648.2343879888"],
        ["44.6459","36.099","0.637","6.371563","50.27163207","646.007","50.27163207,646.007","648.4981545","50.27163207,648.498154456275"],
        ["44.6456","36.099","0.657","6.567832","51.82019448","645.086","51.82019448,645.086","648.8581952","51.82019448,648.8581952166"],
        ["44.6454","36.099","0.675","6.754479","53.29283931","643.481","53.29283931,643.481","649.2005851","53.29283931,649.200585139575"],
        ["44.6455","36.100","0.724","7.244128","57.15616992","645.294","57.15616992,645.294","650.0988095","57.15616992,650.0988095064"]
    ];
    var heads = ["LONG(X)","LAT(Y)","DIST","distance*10","corrected distance by factor(7.89)","ALT(Z)"];
    var bigHeads = ["Designed Z","CORRECTED DISTANCE, designed Z","X,Y,Z"];
    var fill = "bg-[linear-gradient(#fffaf5,#f5cfa8_45%,#e69c52_82%,#e87c22)]";

    var gridCell = "border-r border-b border-[#d9d9d9]";
    var rowHead = "flex items-center justify-center leading-none border-r border-b border-[#d4d4d4] bg-white text-[#666]";
    var html = "";

    // column header row
    html += '<div class="flex items-end justify-end border-r border-b border-[#c6c6c6]"><span class="mr-[3px] mb-[3px] border-b-[11px] border-l-[11px] border-b-[#c6c6c6] border-l-transparent"></span></div>';
    letters.forEach(function(l) {
        if (l == "B") html += '<div class="flex items-center justify-center pb-[2px] leading-none bg-[#d2d2d2] border-b-2 border-[#217346] text-[#217346] font-bold text-[13px] font-[\'Open_Sans\',sans-serif]">B</div>';
        else html += '<div class="flex items-center justify-center pb-[2px] leading-none border-r border-b border-[#c6c6c6] text-[#666] text-[13px] font-[\'Open_Sans\',sans-serif] font-light">' + l + '</div>';
    });

    // row 1
    html += '<div class="flex items-end justify-center pb-[1px] bg-[#e1e1e1] border-b border-[#c6c6c6] text-[#217346] font-bold">1</div>';
    heads.forEach(function(h, i) {
        var side = i < 2 ? "" : "border-r-[3px] border-r-black";
        var size = i == 4 ? "text-[12.700px]" : "";
        html += '<div class="flex items-center justify-center pt-[2px] whitespace-nowrap overflow-hidden text-[#222] border-t border-b-[3px] border-t-black border-b-black ' + fill + ' ' + side + ' ' + size + '">' + h + '</div>';
    });
    html += '<div class="flex items-center justify-center whitespace-nowrap overflow-hidden text-[#222] text-[11.900px] border-r-[3px] border-r-black ' + fill + '">CORRECTED DISTANCE,Z</div>';
    bigHeads.forEach(function(h) {
        html += '<div class="flex items-center justify-center whitespace-nowrap text-[#222] text-[15.700px] border-r-[3px] border-r-black ' + fill + '">' + h + '</div>';
    });
    for (var k = 0; k < 5; k++) html += '<div class="' + gridCell + '"></div>';

    // data rows 2-28
    rows.forEach(function(r, i) {
        html += '<div class="' + rowHead + '">' + (i + 2) + '</div>';
        r.forEach(function(v, c) {
            var align = c == 6 ? "text-left pl-[3px]" : "text-center";
            html += '<div class="bg-[#ffff00] text-[#e0340e] leading-[18px] whitespace-nowrap overflow-hidden ' + align + '">' + v + '</div>';
        });
        html += '<div class="bg-[#ffff00]"></div>';
        for (var k = 0; k < 5; k++) html += '<div class="' + gridCell + '"></div>';
    });

    // rows 29-38, with the merged summation cell in E30:E31
    for (var n = 29; n <= 38; n++) {
        html += '<div class="' + rowHead + '">' + n + '</div>';
        for (var c = 0; c < 15; c++) {
            if (c == 4 && n == 30) {
                html += '<div class="row-span-2 flex flex-col items-center justify-center leading-[18px] text-[#333] bg-[radial-gradient(circle_at_1.5px_1.5px,#333_0.6px,transparent_0.7px)] bg-[length:4px_4px]"><span>SUMMATION</span><span>725.0132756</span></div>';
            } else if (c == 4 && n == 31) {
                continue;
            } else {
                html += '<div class="' + gridCell + '"></div>';
            }
        }
    }
    document.getElementById("grid").innerHTML = html;
</script>
</body>
</html>
